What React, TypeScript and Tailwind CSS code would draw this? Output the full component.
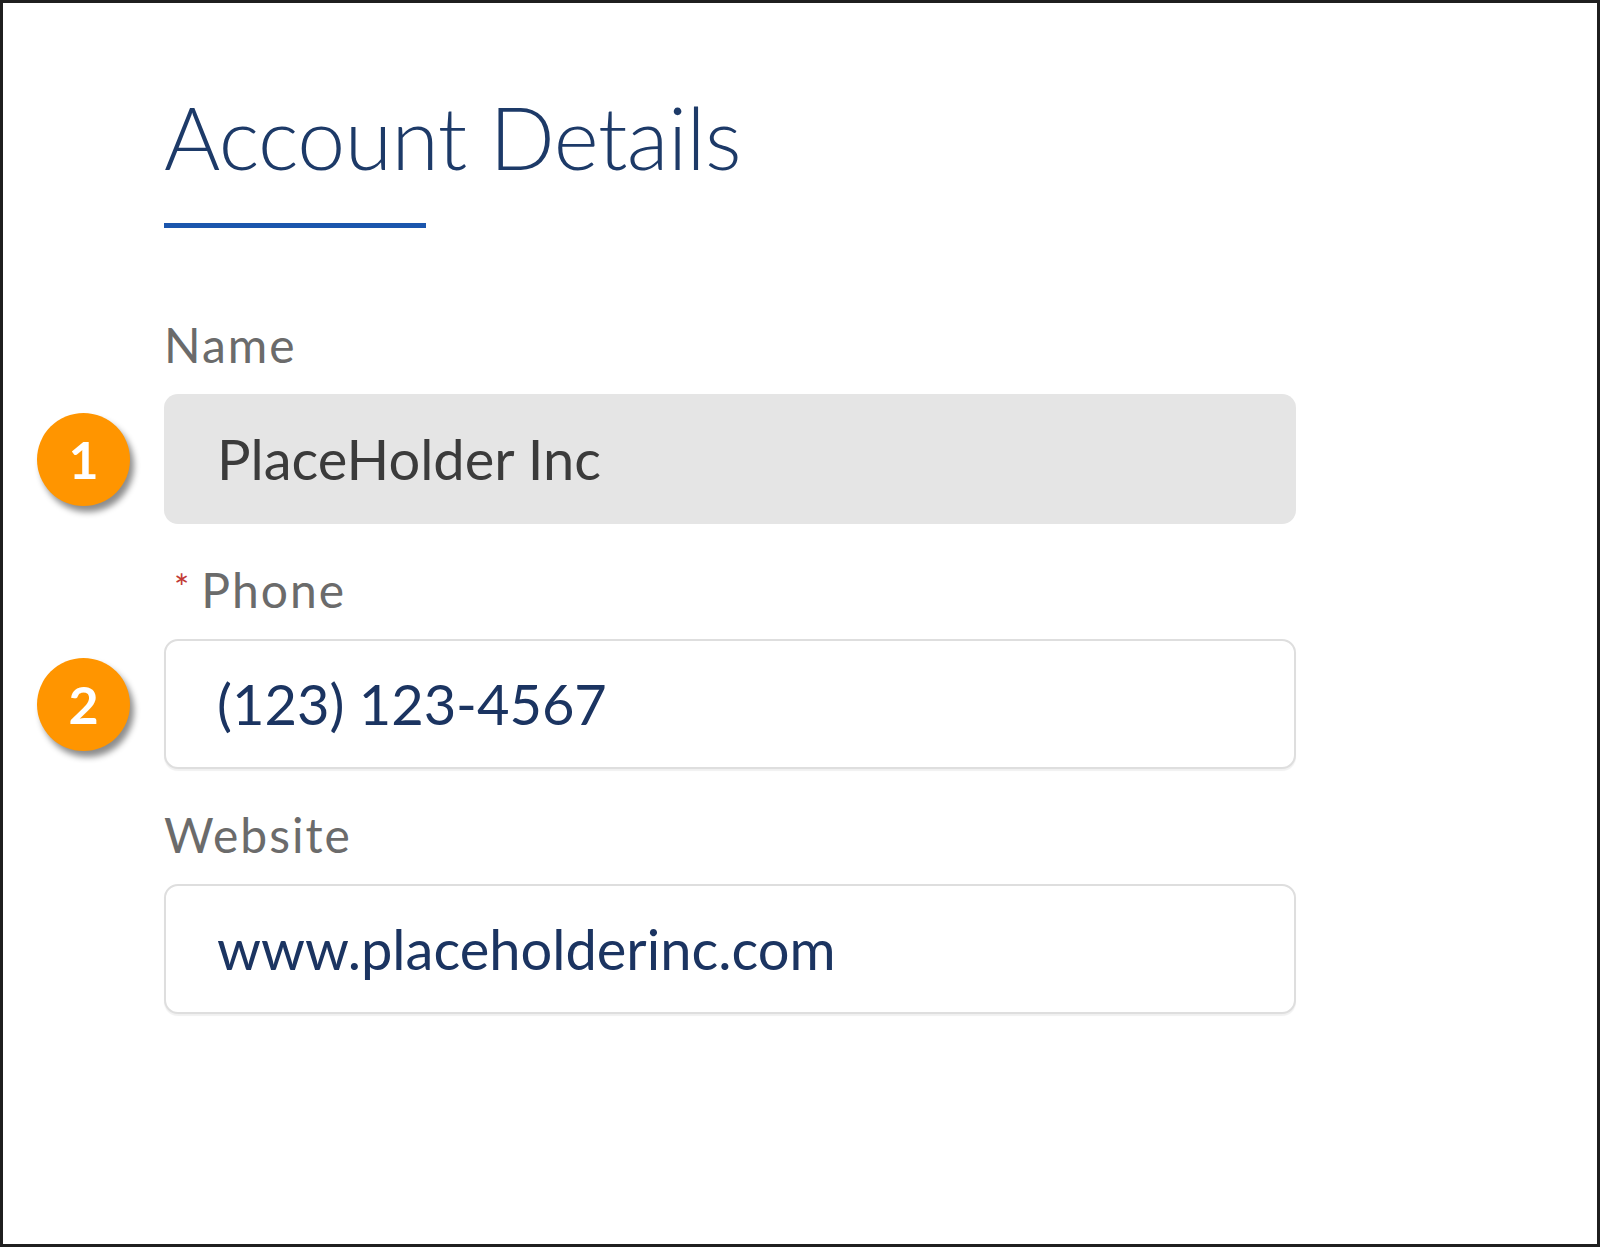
import React from "react";

type Field = {
  label: string;
  value: string;
  badge?: string;
  required?: boolean;
  readOnly?: boolean;
};

const fields: Field[] = [
  { label: "Name", value: "PlaceHolder Inc", badge: "1", readOnly: true },
  { label: "Phone", value: "(123) 123-4567", badge: "2", required: true },
  { label: "Website", value: "www.placeholderinc.com" },
];

const Badge = ({ n }: { n: string }) => (
  <div className="w-[93px] h-[93px] rounded-full bg-[#ff9500] shadow-[4px_6px_6px_rgba(0,0,0,0.45)] flex items-center justify-center text-white font-bold text-[52px] leading-none">
    {n}
  </div>
);

export default function App() {
  return (
    <div className="w-full h-[1247px] border-[3px] border-[#1f1f1f] bg-white font-['Lato',sans-serif]">
      <div className="pt-[91px]">
        {/* Title */}
        <div className="pl-[161px]">
          <h1 className="text-[86px] leading-none font-light tracking-[-0.5px] text-[#1d3a68]">Account Details</h1>
          <div className="mt-[43px] h-[5px] w-[262px] bg-[#1b56ad]" />
        </div>

        {/* Fields */}
        <div className="mt-[93px] flex flex-col gap-[42px]">
          {fields.map((f) => (
            <div key={f.label}>
              <div className="pl-[161px] mb-[25px] flex items-start text-[48px] leading-none tracking-[2px] text-[#6b6b6b]">
                {f.required && <span className="text-[#c23934] text-[36px] mt-[3px] mr-[10px] ml-[10px]">*</span>}
                <span>{f.label}</span>
              </div>
              <div className="flex items-center">
                <div className="w-[161px] shrink-0 flex justify-center">{f.badge && <Badge n={f.badge} />}</div>
                <div
                  className={
                    f.readOnly
                      ? "w-[1132px] h-[130px] rounded-[14px] bg-[#e5e5e5] flex items-center pl-[53px] text-[56px] text-[#3b3b3b]"
                      : "w-[1132px] h-[130px] rounded-[14px] bg-white border-2 border-[#dedede] shadow-[0_2px_1px_rgba(0,0,0,0.06)] flex items-center pl-[51px] text-[56px] text-[#1b3461]"
                  }
                >
                  {f.value}
                </div>
              </div>
            </div>
          ))}
        </div>
      </div>
    </div>
  );
}
